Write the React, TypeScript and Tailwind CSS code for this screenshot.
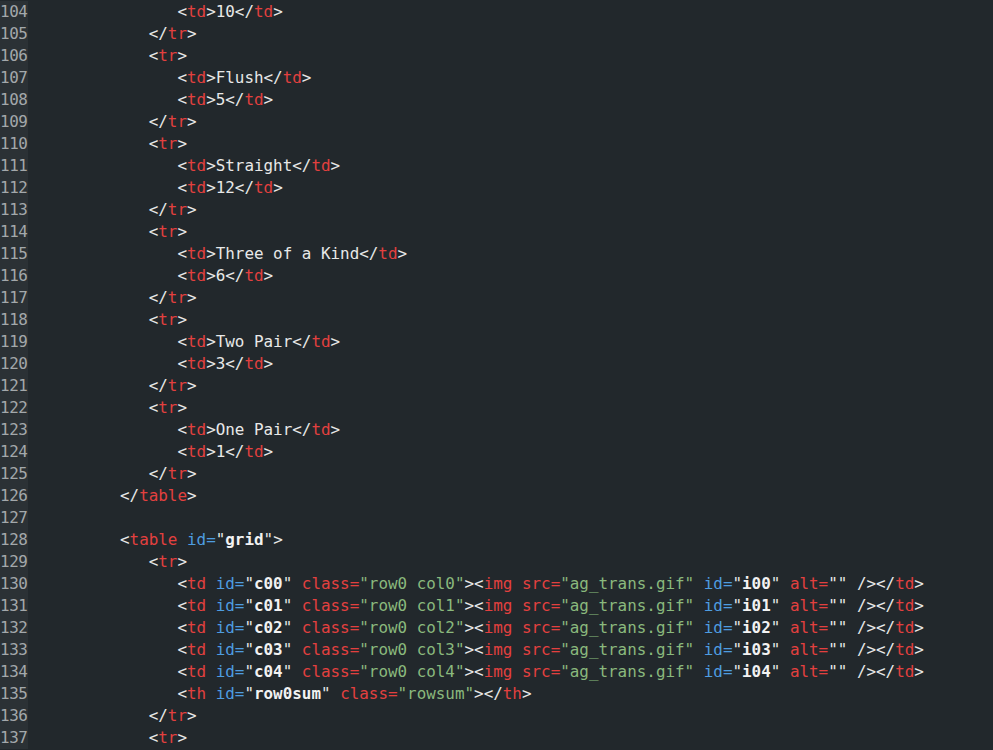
import React from "react";

type Tok = [string, string];
const W = "text-[#e8e8e8]";
const WB = "text-[#f2f2f2] font-bold";
const R = "text-[#e3403f]";
const B = "text-[#4e9de0]";
const G = "text-[#8ab97d]";

const tag = (name: string, close = false): Tok[] => [
  [close ? "</" : "<", W],
  [name, R],
  [">", W],
];
const td = (content: string): Tok[] => [...tag("td"), [content, W], ...tag("td", true)];

const idVal = (v: string): Tok[] => [
  ['"', W],
  [v, WB],
  ['"', W],
];

const cell = (i: number): Tok[] => [
  ["<", W],
  ["td", R],
  [" ", W],
  ["id=", B],
  ...idVal(`c0${i}`),
  [" ", W],
  ["class=", R],
  [`"row0 col${i}"`, G],
  [">", W],
  ["<", W],
  ["img", R],
  [" ", W],
  ["src=", R],
  ['"ag_trans.gif"', G],
  [" ", W],
  ["id=", B],
  ...idVal(`i0${i}`),
  [" ", W],
  ["alt=", R],
  ['""', W],
  [" />", W],
  ...tag("td", true),
];

const lines: [number, Tok[]][] = [
  [6, td("10")],
  [3, tag("tr", true)],
  [3, tag("tr")],
  [6, td("Flush")],
  [6, td("5")],
  [3, tag("tr", true)],
  [3, tag("tr")],
  [6, td("Straight")],
  [6, td("12")],
  [3, tag("tr", true)],
  [3, tag("tr")],
  [6, td("Three of a Kind")],
  [6, td("6")],
  [3, tag("tr", true)],
  [3, tag("tr")],
  [6, td("Two Pair")],
  [6, td("3")],
  [3, tag("tr", true)],
  [3, tag("tr")],
  [6, td("One Pair")],
  [6, td("1")],
  [3, tag("tr", true)],
  [0, tag("table", true)],
  [0, []],
  [
    0,
    [
      ["<", W],
      ["table", R],
      [" ", W],
      ["id=", B],
      ...idVal("grid"),
      [">", W],
    ],
  ],
  [3, tag("tr")],
  [6, cell(0)],
  [6, cell(1)],
  [6, cell(2)],
  [6, cell(3)],
  [6, cell(4)],
  [
    6,
    [
      ["<", W],
      ["th", R],
      [" ", W],
      ["id=", B],
      ...idVal("row0sum"),
      [" ", W],
      ["class=", R],
      ['"rowsum"', G],
      ["></", W],
      ["th", R],
      [">", W],
    ],
  ],
  [3, tag("tr", true)],
  [3, tag("tr")],
];

export default function App() {
  return (
    <div
      className="w-[993px] h-[750px] overflow-hidden bg-[#22282c] text-[15.9px] leading-[22px]"
      style={{ fontFamily: '"DejaVu Sans Mono", "Liberation Mono", monospace' }}
    >
      <div className="flex flex-col pt-[1px]">
        {lines.map(([indent, toks], i) => (
          <div key={i} className="flex h-[22px] whitespace-pre">
            <div className="w-[28px] shrink-0 overflow-hidden bg-[#2b3135] text-[#a3a8ab] tracking-[-0.4px]">
              {104 + i}
            </div>
            <div className="pl-[92px]">
              {" ".repeat(indent)}
              {toks.map(([t, c], j) => (
                <span key={j} className={c}>
                  {t}
                </span>
              ))}
            </div>
          </div>
        ))}
      </div>
    </div>
  );
}
